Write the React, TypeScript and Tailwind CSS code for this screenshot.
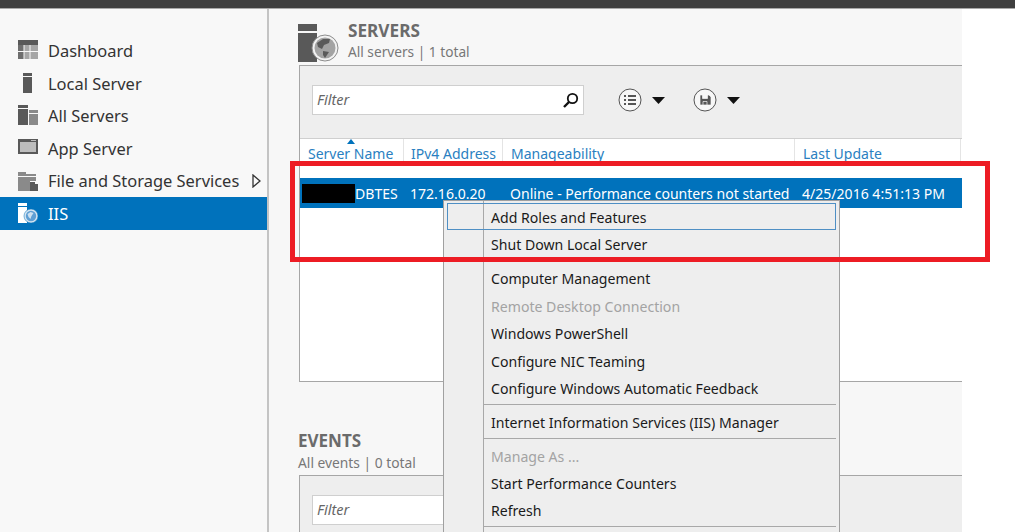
import { Fragment } from 'react';

const font = { fontFamily: '"Noto Sans", "Open Sans", sans-serif' };

function DashboardIcon() {
  return (
    <svg className="shrink-0" width="20" height="20" viewBox="0 0 20 20">
      <rect x="0" y="0" width="20" height="5" fill="#595959" />
      <rect x="0" y="5" width="20" height="14" fill="#a6a6a6" />
      <rect x="0" y="5" width="6" height="14" fill="#6e6e6e" />
      <path d="M6 5v14M12 5v14M0 11.5h20" stroke="#f7f7f7" strokeWidth="1" />
    </svg>
  );
}

function LocalIcon() {
  return (
    <svg className="shrink-0" width="20" height="20" viewBox="0 0 20 20">
      <rect x="5" y="0" width="9" height="3" fill="#595959" />
      <rect x="5" y="4" width="9" height="16" fill="#595959" />
    </svg>
  );
}

function AllServersIcon() {
  return (
    <svg className="shrink-0" width="20" height="20" viewBox="0 0 20 20">
      <rect x="0" y="0" width="10" height="3" fill="#595959" />
      <rect x="0" y="4" width="10" height="16" fill="#595959" />
      <rect x="11" y="5" width="9" height="3" fill="#8a8a8a" />
      <rect x="11" y="9" width="9" height="11" fill="#8a8a8a" />
    </svg>
  );
}

function AppIcon() {
  return (
    <svg className="shrink-0" width="20" height="20" viewBox="0 0 20 20">
      <rect x="0" y="1" width="20" height="15" fill="#595959" />
      <rect x="2" y="4" width="16" height="10" fill="#bdbdbd" />
      <rect x="13" y="2" width="5" height="1" fill="#bdbdbd" />
    </svg>
  );
}

function FileIcon() {
  return (
    <svg className="shrink-0" width="20" height="20" viewBox="0 0 20 20">
      <path d="M0 1h8v2h10v2H0z" fill="#8a8a8a" />
      <path d="M0 6h18v4h-6v10H0z" fill="#8a8a8a" />
      <path d="M12 11h5v2h3v7h-8z" fill="#595959" />
    </svg>
  );
}

function IisIcon() {
  return (
    <svg className="shrink-0" width="20" height="20" viewBox="0 0 20 20">
      <rect x="0" y="0" width="9" height="3" fill="#fff" />
      <rect x="0" y="4" width="9" height="16" fill="#fff" />
      <circle cx="13" cy="13" r="7" fill="#d5e4f0" stroke="#0072bc" strokeWidth="0.5" />
      <circle cx="13" cy="13" r="5.2" fill="#5f9fd4" />
      <path d="M9.5 11l3-2 3 1-2 3-1 3-2-2z" fill="#cfe1f0" />
    </svg>
  );
}

function ServersIcon() {
  return (
    <svg className="shrink-0" width="41" height="38" viewBox="0 0 41 38">
      <rect x="0" y="0" width="19" height="7" fill="#595959" />
      <rect x="0" y="9" width="19" height="29" fill="#595959" />
      <circle cx="27" cy="24" r="13" fill="#f2f2f2" stroke="#8c8c8c" strokeWidth="1" />
      <circle cx="27" cy="24" r="10.5" fill="#a3a3a3" />
      <path d="M19 19l6-4 7 0-1 4-5 2-2 4-4-2zM25 27l6 1-4 6-2-3z" fill="#5a5a5a" />
    </svg>
  );
}

function RoundIcon({ kind }: { kind: 'list' | 'save' }) {
  return (
    <svg width="24" height="24" viewBox="0 0 24 24">
      <circle cx="12" cy="12" r="11" fill="#f7f7f7" stroke="#555" strokeWidth="1" />
      {kind === 'list' ? (
        <path d="M6 8h2M10 8h8M6 12h2M10 12h8M6 16h2M10 16h8" stroke="#555" strokeWidth="2" />
      ) : (
        <path d="M7 7h9l2 2v8H7zM9.5 7v3.5h5V7M10 17v-3.5h4V17" fill="#555" stroke="#f7f7f7" strokeWidth="0.7" />
      )}
    </svg>
  );
}

function Caret() {
  return (
    <svg width="13" height="7" viewBox="0 0 13 7">
      <path d="M0 0h13L6.5 7z" fill="#111" />
    </svg>
  );
}

function FilterBox({ search }: { search?: boolean }) {
  return (
    <div className="flex h-[30px] w-[272px] items-center justify-between border border-[#cfcfcf] bg-white pl-1 pr-1">
      <span className="text-[14.5px] italic text-[#666]">Filter</span>
      {search && (
        <svg width="17" height="17" viewBox="0 0 17 17">
          <circle cx="10.5" cy="6.5" r="4.7" fill="none" stroke="#111" strokeWidth="1.8" />
          <path d="M7 10l-5 5" stroke="#111" strokeWidth="2.4" />
        </svg>
      )}
    </div>
  );
}

const nav = [
  { label: 'Dashboard', icon: <DashboardIcon /> },
  { label: 'Local Server', icon: <LocalIcon /> },
  { label: 'All Servers', icon: <AllServersIcon /> },
  { label: 'App Server', icon: <AppIcon /> },
  { label: 'File and Storage Services', icon: <FileIcon />, more: true },
  { label: 'IIS', icon: <IisIcon />, active: true },
];

const columns = [
  { label: 'Server Name', w: 'w-[104px] pl-[8px]', sorted: true },
  { label: 'IPv4 Address', w: 'w-[99px] pl-[7px]' },
  { label: 'Manageability', w: 'w-[292px] pl-[8px]' },
  { label: 'Last Update', w: 'w-[166px] pl-[8px]' },
];

type MenuRow = { label?: string; h?: string; off?: boolean; hot?: boolean; line?: boolean };

const menu: MenuRow[] = [
  { label: 'Add Roles and Features', h: 'h-[27px]', hot: true },
  { label: 'Shut Down Local Server', h: 'h-[27px]' },
  { line: true },
  { label: 'Computer Management', h: 'h-[27.5px]' },
  { label: 'Remote Desktop Connection', h: 'h-[27.5px]', off: true },
  { label: 'Windows PowerShell', h: 'h-[27.5px]' },
  { label: 'Configure NIC Teaming', h: 'h-[27.5px]' },
  { label: 'Configure Windows Automatic Feedback', h: 'h-[27.5px]' },
  { line: true },
  { label: 'Internet Information Services (IIS) Manager', h: 'h-[27px]' },
  { line: true },
  { label: 'Manage As ...', h: 'h-[26px]', off: true },
  { label: 'Start Performance Counters', h: 'h-[28px]' },
  { label: 'Refresh', h: 'h-[27px]' },
  { line: true },
  { h: 'h-[27px]' },
];

export default function App() {
  return (
    <div className="relative flex h-[532px] w-[1015px] flex-col overflow-hidden bg-white" style={font}>
      <div className="h-[9px] shrink-0 border-b border-[#a8a8a8] bg-[#3f3f3f]" />

      <div className="flex min-h-0 flex-1">
        <aside className="w-[269px] shrink-0 border-r-2 border-[#c4c4c4] bg-[#f8f8f8] pt-[25px]">
          {nav.map((item) => (
            <div
              key={item.label}
              className={`flex h-[32.6px] items-center gap-[10px] pl-[18px] text-[16.45px] ${
                item.active ? 'bg-[#0072bc] text-white' : 'text-[#333]'
              }`}
            >
              {item.icon}
              <span className="whitespace-nowrap pt-[2px]">{item.label}</span>
              {item.more && (
                <svg className="ml-[3px] shrink-0" width="9" height="14" viewBox="0 0 9 14">
                  <path d="M1 1l7 6-7 6z" fill="none" stroke="#333" strokeWidth="1.3" />
                </svg>
              )}
            </div>
          ))}
        </aside>

        <main className="w-[693px] shrink-0 bg-[#f7f7f7] pl-[29px] pt-[15px]">
          <div className="flex h-[41px] gap-[9px]">
            <ServersIcon />
            <div className="-mt-[3px] flex flex-col">
              <span className="text-[17.2px] font-bold leading-[20px] text-[#6b6b6b]">SERVERS</span>
              <span className="mt-[1px] text-[13.7px] leading-[20px] text-[#777]">All servers | 1 total</span>
            </div>
          </div>

          <section className="ml-[1px] h-[317px] border-y border-l border-[#a6a6a6] bg-white">
            <div className="flex h-[72px] items-center gap-[34px] bg-[#eeeeee] pb-[4px] pl-[12px]">
              <FilterBox search />
              <div className="flex items-center gap-[10px]">
                <RoundIcon kind="list" />
                <Caret />
              </div>
              <div className="-ml-[6px] flex items-center gap-[10px]">
                <RoundIcon kind="save" />
                <Caret />
              </div>
            </div>
            <div className="flex h-[28px] border-t border-[#cfcfcf]">
              {columns.map((c) => (
                <div key={c.label} className={`relative ${c.w} border-r border-[#e4e4e4] pt-[5px] text-[14px] leading-[20px] text-[#2a7fc1]`}>
                  {c.sorted && (
                    <svg className="absolute left-[47px] top-0" width="8" height="5" viewBox="0 0 8 5">
                      <path d="M0 5L4 0l4 5z" fill="#0072bc" />
                    </svg>
                  )}
                  {c.label}
                </div>
              ))}
            </div>
            <div className="mt-[12px] flex h-[30px] items-center bg-[#0072bc] pl-[2px] text-[14.05px] text-white">
              <span className="h-[19px] w-[53px] shrink-0 bg-black" />
              <span className="w-[55px] shrink-0 pt-[2px]">DBTES</span>
              <span className="w-[100px] shrink-0 pt-[2px]">172.16.0.20</span>
              <span className="w-[292px] shrink-0 whitespace-nowrap pt-[2px]">Online - Performance counters not started</span>
              <span className="whitespace-nowrap pt-[2px]">4/25/2016 4:51:13 PM</span>
            </div>
          </section>

          <div className="mt-[49px] text-[17px] font-bold leading-[20px] text-[#6b6b6b]">EVENTS</div>
          <div className="mt-[2px] text-[13.8px] leading-[20px] text-[#777]">All events | 0 total</div>
          <section className="ml-[1px] mt-[2px] h-[60px] border-t border-l border-[#a6a6a6] bg-[#eeeeee] pl-[12px] pt-[19px]">
            <FilterBox />
          </section>
        </main>
      </div>

      {/* context menu */}
      <div className="absolute left-[443px] top-[200px] w-[397px] border border-[#a0a0a0] bg-[#eeeeee] p-[2px] text-[14.1px] text-[#1a1a1a]">
        <div className="absolute bottom-0 left-[39px] top-0 w-px bg-[#a8a8a8]" />
        {menu.map((row, i) => (
          <Fragment key={i}>
            {row.line ? (
              <div className="mb-[4px] ml-[38px] mr-[1px] mt-[2px] h-px bg-[#a8a8a8]" />
            ) : (
              <div
                className={`relative flex ${row.h} items-center pt-[2px] ${row.off ? 'text-[#a3a3a3]' : ''} ${
                  row.hot ? 'ml-[1px] mr-[1px] border border-[#4f8fc4] pl-[43px]' : 'pl-[45px]'
                }`}
              >
                {row.label}
              </div>
            )}
          </Fragment>
        ))}
      </div>

      {/* red annotation */}
      <div className="absolute left-[290px] top-[161px] h-[101px] w-[700px] border-[5px] border-[#ed1c24]" />
    </div>
  );
}
